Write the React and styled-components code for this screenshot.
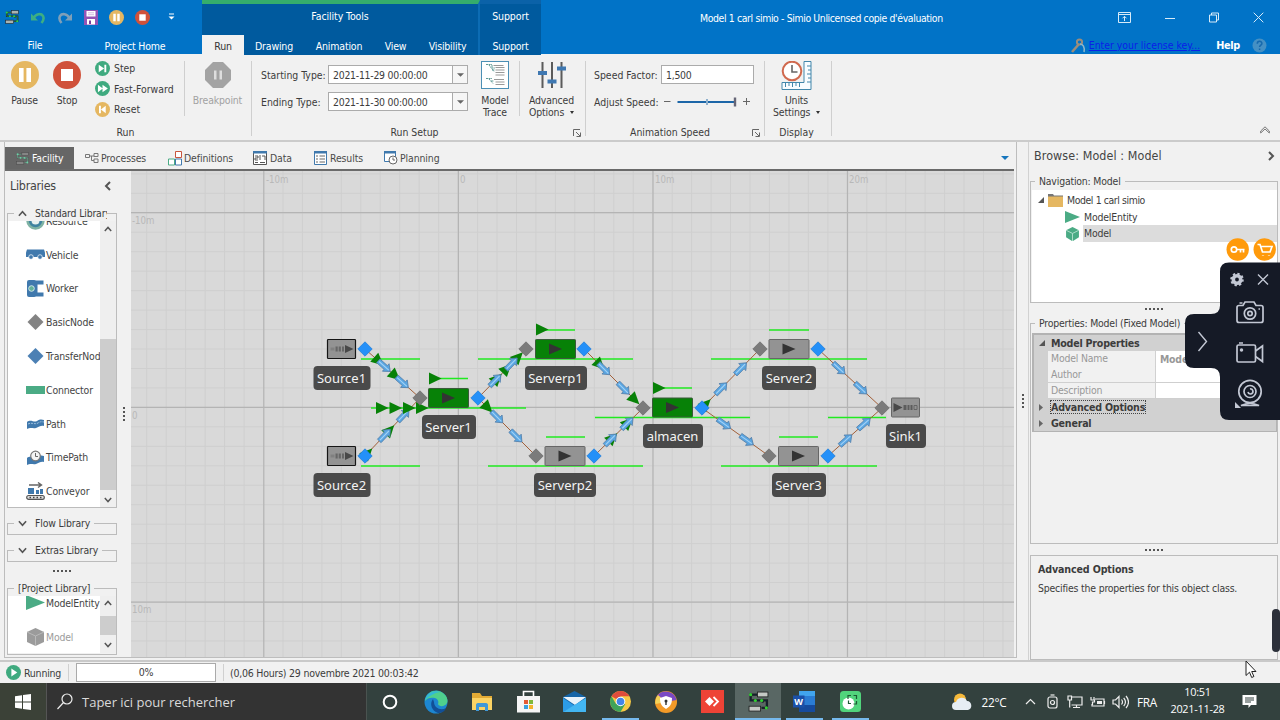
import React from "react";
import styled, { createGlobalStyle, css } from "styled-components";

const UI = '"DejaVu Sans Condensed", "DejaVu Sans", "Noto Sans", sans-serif';
const SEGOE = '"Open Sans", "Noto Sans", sans-serif';

const Global = createGlobalStyle`
  * { box-sizing: border-box; }
  html, body { margin: 0; padding: 0; overflow: hidden; }
  body { font-family: ${UI}; font-stretch: condensed; font-size: 10.4px; color: #3c3c3c; }
  svg { display: block; flex: none; }
`;

const Window = styled.div`
  position: relative;
  width: 1280px;
  height: 720px;
  display: flex;
  flex-direction: column;
  background: #f1f1f1;
  overflow: hidden;
  white-space: nowrap;
`;

/* ---------- title bar ---------- */
const Header = styled.header`
  height: 54px;
  flex: none;
  display: grid;
  grid-template-columns: 202px 278px 61px 1fr;
  background: #0173c7;
  color: #fff;
`;
const HeaderColumn = styled.div`
  display: flex;
  flex-direction: column;
  background: ${(p) => (p.$context ? "#005a9e" : "transparent")};
  border-top: ${(p) => (p.$context ? `4px solid ${p.$context}` : "0")};
  border-right: ${(p) => (p.$edge ? "2px solid #0c6cb4" : "0")};
`;
const QuickBar = styled.div`
  height: 35px;
  display: flex;
  align-items: center;
  padding: 0 0 1px 5px;
  gap: 11px;
`;
const TabStrip = styled.div`
  height: 20px;
  margin-top: auto;
  display: flex;
`;
const RibbonTab = styled.div`
  width: ${(p) => p.$w}px;
  display: flex;
  align-items: center;
  justify-content: center;
  font-size: 10.5px;
  letter-spacing: -0.2px;
  padding-top: ${(p) => (p.$low ? 2 : 0)}px;
  background: ${(p) => (p.$active ? "#f1f1f1" : "transparent")};
  color: ${(p) => (p.$active ? "#333" : "#fff")};
`;
const ContextTitle = styled.div`
  height: 26px;
  text-align: center;
  line-height: 24px;
  font-size: 10.5px;
  letter-spacing: -0.1px;
`;
const TitleRow = styled.div`
  height: 35px;
  display: flex;
  align-items: center;
`;
const AppTitle = styled.div`
  width: 562px;
  padding: 1px 0 0 159px;
  font-size: 10.4px;
  letter-spacing: -0.37px;
`;
const WindowControls = styled.div`
  flex: 1;
  display: flex;
  justify-content: space-between;
  padding: 0 16px 0 15px;
`;
const HelpRow = styled.div`
  height: 19px;
  margin-top: auto;
  display: flex;
  align-items: center;
  justify-content: flex-end;
  padding: 0 13px 1px 0;
`;
const LicenseLink = styled.span`
  color: #0a20e8;
  text-decoration: underline;
  font-size: 10.4px;
  margin: 0 16px 0 3px;
`;
const HelpText = styled.b`
  font-size: 10.8px;
  letter-spacing: -0.3px;
  margin-right: 12px;
`;

/* ---------- ribbon ---------- */
const Ribbon = styled.section`
  position: relative;
  height: 88px;
  flex: none;
  display: flex;
  padding-top: 7px;
  border-bottom: 2px solid #cbcbcb;
`;
const RibbonGroup = styled.div`
  position: relative;
  width: ${(p) => p.$w}px;
  height: 75px;
  display: flex;
  flex-direction: column;
  border-right: 1px solid #cfcfcf;
`;
const GroupBody = styled.div`
  height: 63px;
  flex: none;
  display: flex;
  padding-left: ${(p) => p.$left || 0}px;
`;
const GroupCaption = styled.div`
  height: 15px;
  line-height: 16px;
  text-align: center;
  padding-right: ${(p) => p.$shift || 0}px;
`;
const Launcher = styled.span`
  position: absolute;
  right: 4px;
  bottom: -1px;
`;
const BigButton = styled.div`
  width: ${(p) => p.$w}px;
  display: flex;
  flex-direction: column;
  align-items: center;
  text-align: center;
  line-height: 12px;
  letter-spacing: -0.15px;
  color: ${(p) => (p.$off ? "#a2a2a2" : "#3c3c3c")};
  > span { margin-top: auto; height: 30px; }
`;
const DropMark = styled.i`
  display: inline-block;
  margin-left: 3px;
  vertical-align: 2px;
  border: solid transparent;
  border-width: 3px 2.5px 0;
  border-top-color: #333;
`;
const Separator = styled.div`
  width: 1px;
  height: 55px;
  margin-left: ${(p) => p.$pull || 0}px;
  background: #cfcfcf;
`;
const StackedButtons = styled.div`
  display: flex;
  flex-direction: column;
  margin-top: -3px;
  padding-left: 7px;
  width: 96px;
`;
const SmallButton = styled.div`
  height: 20.6px;
  display: flex;
  align-items: center;
  gap: 4px;
`;
const FieldRows = styled.div`
  display: flex;
  flex-direction: column;
  gap: 8px;
  padding-top: 4px;
  width: ${(p) => p.$w}px;
`;
const FieldRow = styled.label`
  height: 19px;
  display: flex;
  align-items: center;
`;
const FieldLabel = styled.span`
  width: ${(p) => p.$w}px;
`;
const Combo = styled.span`
  width: ${(p) => p.$w}px;
  height: 19px;
  display: flex;
  align-items: center;
  background: #fff;
  border: 1px solid #ababab;
  padding-left: 4px;
  letter-spacing: -0.25px;
`;
const ComboArrow = styled.i`
  margin-left: auto;
  width: 15px;
  height: 17px;
  display: grid;
  place-items: center;
  border-left: 1px solid #ababab;
  background: #f6f6f6;
`;
const Collapse = styled.span`
  position: absolute;
  right: 10px;
  bottom: 6px;
`;
const SliderRow = styled.div`
  height: 19px;
  display: flex;
  align-items: center;
`;

/* ---------- workspace ---------- */
const Workspace = styled.main`
  height: 520px;
  flex: none;
  display: flex;
  padding-left: 4px;
  border-bottom: 2px solid #c9c9c9;
`;
const Dock = styled.section`
  width: 1013px;
  height: 516px;
  display: flex;
  flex-direction: column;
  border: solid #bdbdbd;
  border-width: 0 1px 1px 1px;
  padding: 5px 2px 0 0;
`;
const DocTabs = styled.nav`
  height: 24px;
  flex: none;
  display: flex;
  align-items: center;
  border-bottom: 2px solid #6a6a6a;
  letter-spacing: -0.1px;
`;
const DocTab = styled.div`
  width: ${(p) => p.$w}px;
  height: 22px;
  display: flex;
  align-items: center;
  gap: ${(p) => p.$gap || 3}px;
  padding-left: ${(p) => p.$pl}px;
  background: ${(p) => (p.$active ? "#666" : "transparent")};
  color: ${(p) => (p.$active ? "#fff" : "#4a4a4a")};
`;
const DocMenu = styled.span`
  margin-left: auto;
  padding-right: 5px;
`;
const DockBody = styled.div`
  flex: 1;
  display: flex;
`;
const LibraryPanel = styled.aside`
  width: 112px;
  padding-left: 2px;
  display: flex;
  flex-direction: column;
  letter-spacing: -0.15px;
`;
const PanelTitle = styled.h2`
  margin: 0;
  height: ${(p) => p.$h}px;
  display: flex;
  align-items: center;
  justify-content: space-between;
  padding: ${(p) => p.$pad};
  font-size: 12.4px;
  letter-spacing: ${(p) => p.$ls || 0}px;
  font-weight: normal;
  color: #444;
`;
const GroupBox = styled.fieldset`
  min-width: 0;
  margin: ${(p) => p.$m || 0};
  padding: 0;
  height: ${(p) => p.$h}px;
  border: 1px solid #bcbcbc;
  flex: none;
`;
const Legend = styled.legend`
  margin-left: ${(p) => (p.$ml === undefined ? 8 : p.$ml)}px;
  padding: 0 ${(p) => (p.$pr === undefined ? 4 : p.$pr)}px 0 4px;
  height: 16px;
  max-width: 93px;
  overflow: hidden;
  display: flex;
  align-items: center;
  gap: 8px;
  ${(p) => p.$wide && css`max-width: none;`}
`;
const ListArea = styled.div`
  height: ${(p) => p.$h}px;
  display: flex;
  background: #fff;
  overflow: hidden;
`;
const ItemList = styled.div`
  width: 92px;
  margin-top: ${(p) => p.$offset}px;
  padding-left: 18px;
  overflow: hidden;
`;
const LibraryItem = styled.div`
  height: 33.8px;
  display: flex;
  align-items: center;
  gap: 1px;
  color: ${(p) => (p.$off ? "#9c9c9c" : "#444")};
`;
const ScrollTrack = styled.div`
  width: 16px;
  height: 100%;
  display: flex;
  flex-direction: column;
  align-items: center;
  background: #efefef;
  padding: ${(p) => p.$pad};
`;
const ScrollThumb = styled.div`
  width: 16px;
  height: ${(p) => p.$h}px;
  margin: ${(p) => p.$m};
  background: #cdcdcd;
`;
const Grip = styled.div`
  display: flex;
  flex-direction: ${(p) => (p.$vertical ? "column" : "row")};
  align-items: center;
  justify-content: center;
  gap: 2px;
  height: ${(p) => p.$h || "auto"};
  width: ${(p) => p.$w || "auto"};
  i { width: 2px; height: 2px; background: #555; }
`;

/* ---------- model canvas ---------- */
const Canvas = styled.div`
  position: relative;
  width: 883px;
  height: 486px;
  background: #d9d9d9;
  overflow: hidden;
`;
const GridMark = styled.span`
  position: absolute;
  left: ${(p) => p.$x}px;
  top: ${(p) => p.$y}px;
  font-size: 9.6px;
  line-height: 12px;
  color: #b8b8b8;
`;
const NodeLabel = styled.span`
  position: absolute;
  left: ${(p) => p.$x}px;
  top: ${(p) => p.$y}px;
  transform: translate(-50%, -50%);
  height: 24px;
  width: ${(p) => p.$w}px;
  text-align: center;
  border-radius: 4px;
  background: #4a4a4a;
  color: #f4f4f4;
  font: 13px/25px "Noto Sans", sans-serif;
`;

/* ---------- browse panel ---------- */
const BrowsePanel = styled.aside`
  flex: 1;
  display: flex;
  flex-direction: column;
  padding: 0 2px 0 1px;
  border-left: 1px solid #d2d2d2;
  letter-spacing: -0.18px;
`;
const TreeRow = styled.div`
  height: 16.7px;
  display: flex;
  align-items: center;
  padding-left: ${(p) => p.$pl}px;
  > span {
    flex: 1;
    line-height: 16.7px;
    margin-left: 4px;
    padding-left: ${(p) => p.$tpl || 0}px;
    background: ${(p) => (p.$selected ? "#dcdcdc" : "transparent")};
  }
`;
const TreeRoot = styled(TreeRow)`
  letter-spacing: -0.4px;
  > svg + svg { margin-left: 4px; }
`;
const TreeArea = styled.div`
  height: 112px;
  padding-top: 2px;
  margin: 1px 0 0 1px;
  background: #fff;
`;
const PropertyGrid = styled.div`
  margin: 2px 0 0 1px;
  border: 1px solid #b3b3b3;
  border-width: 2px 1px 1px 2px;
  background: #d1d1d1;
`;
const PropertyHead = styled.div`
  height: 16px;
  display: flex;
  align-items: center;
  font-weight: bold;
  font-size: 10.6px;
  letter-spacing: -0.22px;
  padding-left: 5px;
  gap: ${(p) => p.$gap}px;
  > b { outline: ${(p) => (p.$focus ? "1px dotted #444" : "none")}; }
`;
const PropertyRow = styled.div`
  height: 16px;
  margin-left: 14px;
  display: grid;
  grid-template-columns: 107px 1fr;
  column-gap: 1px;
  border-bottom: 1px solid #cfcfcf;
  color: #989898;
  > span { background: #f1f1f1; padding-left: 3px; line-height: 15px; }
  > b { background: #fff; padding-left: 4px; line-height: 16px; }
`;
const HelpBox = styled.div`
  height: 105px;
  border: 1px solid #bcbcbc;
  padding: 5px 7px;
  display: flex;
  flex-direction: column;
  gap: 3px;
  line-height: 16px;
  > b { font-size: 10.6px; letter-spacing: -0.13px; }
`;

/* ---------- status bar ---------- */
const StatusBar = styled.footer`
  height: 21px;
  flex: none;
  display: flex;
  align-items: center;
  background: #f1f1f1;
  font-size: 10.5px;
  letter-spacing: -0.23px;
`;
const StatusCell = styled.div`
  width: ${(p) => p.$w}px;
  height: 17px;
  display: flex;
  align-items: center;
  gap: 3px;
  padding-left: 6px;
  border-right: 1px solid #d0d0d0;
`;
const Progress = styled.div`
  width: 140px;
  height: 19px;
  margin: 0 7px;
  border: 1px solid #aaa;
  background: #fff;
  text-align: center;
  line-height: 17px;
`;
const StatusDivider = styled.i`
  width: 1px;
  height: 17px;
  margin-right: 6px;
  background: #d0d0d0;
`;

/* ---------- taskbar ---------- */
const Taskbar = styled.div`
  height: 37px;
  flex: none;
  display: flex;
  background: #33413e;
  color: #fff;
  font-family: ${SEGOE};
  font-stretch: normal;
`;
const StartButton = styled.div`
  width: 46px;
  display: grid;
  place-items: center;
  background: #3b4137;
`;
const SearchBox = styled.div`
  width: 321px;
  display: flex;
  align-items: center;
  gap: 9px;
  padding-left: 10px;
  background: #333;
  border-left: 1px solid #555;
  border-right: 1px solid #4a5350;
  color: #dadada;
  font-size: 13px;
`;
const TaskApp = styled.div`
  width: 46px;
  display: grid;
  place-items: center;
  background: ${(p) => (p.$active ? "#596764" : "transparent")};
  background-image: ${(p) => (p.$running ? "linear-gradient(#76b9ed,#76b9ed)" : "none")};
  background-size: ${(p) => (p.$active ? 46 : 37)}px 2px;
  background-position: center bottom;
  background-repeat: no-repeat;
`;
const Tray = styled.div`
  margin-left: auto;
  width: 330px;
  display: grid;
  grid-template-columns: 24px 45px 22px 22px 24px 21px 24px 30px 71px 32px;
  align-items: center;
  justify-items: center;
  font-size: 11.8px;
  letter-spacing: -0.2px;
`;
const Temperature = styled.span`
  padding-right: 5px;
`;
const Clock = styled.div`
  text-align: center;
  font-size: 10.9px;
  line-height: 17px;
  padding-bottom: 3px;
  letter-spacing: -0.27px;
`;

/* ---------- floating overlays ---------- */
const Floating = styled.div`
  position: absolute;
  left: ${(p) => p.$x}px;
  top: ${(p) => p.$y}px;
`;

/* ---------- icons ---------- */
const PlayBadge = ({ size, fill, kind }) => (
  <svg width={size} height={size} viewBox="0 0 28 28">
    <circle cx="14" cy="14" r="14" fill={fill} />
    {kind === "pause" && <path d="M8 7h4.600v14H8zM15.400 7H20v14h-4.600z" fill="#fff" />}
    {kind === "stop" && <path d="M8 8h12v12H8z" fill="#fff" />}
    {kind === "step" && <path d="M7 7l10 7-10 7zM17.500 7H21v14h-3.500z" fill="#fff" />}
    {kind === "fast" && <path d="M5.500 7l9 7-9 7zM14 7l10 7-10 7z" fill="#fff" />}
    {kind === "reset" && <path d="M20 7l-9 7 9 7zM7.500 7H11v14H7.500z" fill="#fff" />}
    {kind === "play" && <path d="M10 6.500l11 7.500-11 7.500z" fill="#fff" />}
  </svg>
);
const SimioGlyph = ({ size = 15, body = "#a9b3b0", wire = "#2c8f4a", dot = "#2bd04a", edge = "#222" }) => (
  <svg width={size} height={size} viewBox="0 0 20 20">
    <path d="M9 3.500H2.500V9H9m0 0h5v2m0-2h4v7h-5" fill="none" stroke={edge} strokeWidth="2.200" />
    <path d="M9 3.500H2.500V9H9m0 0h5v2m0-2h4v7h-5" fill="none" stroke={wire} strokeWidth="1" />
    <rect x="9" y="1" width="10" height="4.600" fill={body} stroke={edge} strokeWidth=".8" />
    <rect x="1" y="14.500" width="11" height="4.600" fill={body} stroke={edge} strokeWidth=".8" />
    {[[2.5, 3.5], [7, 9], [13, 9], [17.5, 16]].map(([x, y]) => <circle key={x} cx={x} cy={y} r="1.500" fill={dot} />)}
  </svg>
);
const Undo = ({ color, flip }) => (
  <svg width="16" height="14" viewBox="0 0 16 14">
    <g transform={flip ? "translate(16 1) scale(-1 1)" : "translate(0 1)"}>
      <path d="M1 2.500v7h7z" fill={color} />
      <path d="M3.500 7C6 2.500 11 2 13 5c1 2 .6 4.500-1.500 7" fill="none" stroke={color} strokeWidth="2.600" />
    </g>
  </svg>
);
const Save = () => (
  <svg width="14" height="15" viewBox="0 0 14 15">
    <path d="M0 0h14v15H0z" fill="#9455b5" />
    <path d="M2.500 1h9v5.500h-9zM3 9h8v5.500H3z" fill="#fff" />
    <path d="M4 2.800h6M4 4.700h6" stroke="#c9a9d8" strokeWidth=".8" />
    <path d="M5 10.500h2V14H5z" fill="#7a3f9c" />
  </svg>
);
const Tri = ({ color = "#666", w = 7, h = 4 }) => (
  <svg width={w} height={h} viewBox="0 0 8 4"><path d="M0 0h8L4 4z" fill={color} /></svg>
);
const Chevron = ({ d = "up", color = "#555", s = 9, w = 1.8 }) => (
  <svg width={s} height={s} viewBox="0 0 10 10">
    <path d={{ up: "M1 7.500l4-4.500 4 4.500", down: "M1 2.500L5 7l4-4.500", left: "M7 1L3 5l4 4", right: "M3 1l4 4-4 4" }[d]} fill="none" stroke={color} strokeWidth={w} />
  </svg>
);
const Octagon = () => (
  <svg width="26" height="27" viewBox="0 0 26 27">
    <path d="M8 1h10l8 8v10l-8 8H8l-8-8V9z" fill="#a3a3a3" />
    <path d="M9 9.500h2.500v9H9zM14.500 9.500H17v9h-2.500z" fill="#dedede" />
  </svg>
);
const TraceIcon = () => (
  <svg width="28" height="28" viewBox="0 0 28 28">
    <rect x=".5" y=".5" width="27" height="27" fill="#fff" stroke="#4b8fb5" />
    <path d="M5 3.500h6M8 4l5 6.500M11 4v3h3M11 9h3M5 17.500h6M8 18l4 4.500M10 20h3" stroke="#5f9a96" fill="none" strokeDasharray="2 .6" />
    <path d="M12.500 4.500h10M14.500 6.500h9M14.500 9h9M14.500 11.500h9M14.500 14h9M13 18.500h10M14.500 21h9M14.500 23.500h9" stroke="#999" />
  </svg>
);
const Sliders = () => (
  <svg width="28" height="28" viewBox="0 0 28 28">
    <path d="M4.500 1v26M14 1v26M23.500 1v26" stroke="#5b5b5b" strokeWidth="2" />
    <path d="M0 10h9v4H0zM9.500 18.500h9v4h-9zM19 5.500h9v4h-9z" fill="#3f78b1" />
  </svg>
);
const UnitsIcon = () => (
  <svg width="31" height="30" viewBox="0 0 31 30">
    <path d="M23 .5h7v28H1v-7h22z" fill="#f8fcff" stroke="#4287ab" />
    <path d="M4.500 22v4M8 22v3M11.500 22v4M15 22v3M18.500 22v4M30 5h-4M30 9h-3M30 13h-4M30 17h-3M30 21h-4" stroke="#4287ab" />
    <circle cx="11" cy="10" r="9.300" fill="#fff" stroke="#d0694e" strokeWidth="2" />
    <path d="M11 4v7h5.500" fill="none" stroke="#666" strokeWidth="1.600" />
  </svg>
);
const LauncherIcon = () => (
  <svg width="8" height="8" viewBox="0 0 8 8">
    <path d="M.5 7V.5H7M3 3l4 4M7.500 3.500v4h-4" fill="none" stroke="#666" />
  </svg>
);
const SpeedSlider = () => (
  <svg width="90" height="10" viewBox="0 0 90 10">
    <path d="M3 4.500h6.500M82 4.500h7M85.500 1v7" stroke="#666" strokeWidth="1" />
    <path d="M16.500 5h56.500" stroke="#1c66a8" strokeWidth="2" />
    <path d="M46 2v6" stroke="#8fb0cc" strokeWidth="2" />
    <path d="M74 .5v9" stroke="#667" strokeWidth="2.400" />
  </svg>
);
const CubeIcon = ({ size = 15, color, line }) => (
  <svg width={size} height={size * 1.1} viewBox="0 0 18 20">
    <path d="M9 0l9 4.500v10L9 20l-9-5.500v-10z" fill={color} />
    <path d="M0 4.500L9 9l9-4.500M9 9v11" fill="none" stroke={line} strokeWidth="1.200" />
  </svg>
);
const FolderIcon = () => (
  <svg width="15" height="13" viewBox="0 0 15 13"><path d="M0 0h5l1 1.500h9V4H0z" fill="#777" /><path d="M0 2.500h15V13H0z" fill="#e5b761" /></svg>
);
const Flag = ({ w = 19, h = 15 }) => (
  <svg width={w} height={h} viewBox="0 0 19 15"><path d="M0 0l19 7.500L0 15z" fill="#4bab85" /></svg>
);
const Wave = () => <path d="M1 4c4-3 7 1 10-1s5-1.500 7-1v6c-3-1-5 1-8 2s-5-1-9 1z" fill="#4079ad" />;
const libraryIcons = {
  Resource: <svg width="19" height="19" viewBox="0 0 19 19"><circle cx="9.500" cy="9.500" r="8" fill="#3f83a0" stroke="#7fb3a4" strokeWidth="2.500" /><circle cx="9.500" cy="9.500" r="4" fill="#e6f0ee" /></svg>,
  Vehicle: <svg width="19" height="11" viewBox="0 0 19 11"><path d="M1 .5h17l1 3V8H0V3.500z" fill="#4079ad" /><circle cx="5" cy="8" r="2.300" fill="#4079ad" stroke="#fff" strokeWidth=".7" /><circle cx="14" cy="8" r="2.300" fill="#4079ad" stroke="#fff" strokeWidth=".7" /></svg>,
  Worker: <svg width="19" height="17" viewBox="0 0 19 17"><rect x="1" y="0" width="9" height="17" rx="2" fill="#4079ad" /><path d="M8 .5h9.500v4h-6v8h6v4H8z" fill="#4079ad" /><circle cx="5.500" cy="8.500" r="2.800" fill="#62b29a" stroke="#cfe5ea" /></svg>,
  BasicNode: <svg width="19" height="16" viewBox="0 0 19 16"><path d="M9.500 0l8 8-8 8-8-8z" fill="#838383" /></svg>,
  TransferNode: <svg width="19" height="16" viewBox="0 0 19 16"><path d="M9.500 0l8 8-8 8-8-8z" fill="#4c80b4" /></svg>,
  Connector: <svg width="19" height="8"><path d="M0 0h19v8H0z" fill="#4bab85" /></svg>,
  Path: <svg width="19" height="11" viewBox="0 0 19 11"><Wave /><path d="M2 6c4-2 7 1 10-1s4-1 6-1" stroke="#9cc0de" fill="none" strokeDasharray="2 1" /></svg>,
  TimePath: <svg width="19" height="15" viewBox="0 0 19 15"><g transform="translate(0 4)"><Wave /></g><circle cx="9.500" cy="6" r="4.800" fill="#f4f4f4" stroke="#777" strokeWidth="1.200" /><path d="M9.500 3v3.500H12" stroke="#666" fill="none" /></svg>,
  Conveyor: <svg width="19" height="18" viewBox="0 0 19 18"><path d="M3 3h12M12 .5L15.500 3 12 5.500" fill="none" stroke="#666" strokeWidth="1.400" /><path d="M2 6h6v6H2zM10 8h3v4h-3zM14 7h3v5h-3z" fill="#4079ad" /><rect x=".7" y="13.500" width="17.600" height="3.800" rx="1.900" fill="#ddd" stroke="#555" strokeWidth="1.200" /><path d="M3.500 15.400h1.500M7 15.400h1.500M10.500 15.400H12M14 15.400h1.500" stroke="#444" strokeWidth="1.500" /></svg>,
};

/* ---------- model drawing ---------- */
const OX = 131;
const OY = 171;
const step = 19.46;
const range = (a, b) => Array.from({ length: b - a + 1 }, (_, i) => a + i);
const Link = ({ a, b, marks = [], spots = [0.33, 0.67] }) => {
  const angle = (Math.atan2(b[1] - a[1], b[0] - a[0]) * 180) / Math.PI;
  return (
    <g>
      <path d={`M${a}L${b}`} stroke="#a2603a" strokeWidth="1" />
      {marks.map((m) => <Entity key={m} x={a[0] + (b[0] - a[0]) * m} y={a[1] + (b[1] - a[1]) * m} angle={angle} />)}
      {spots.map((t) => (
        <g key={t} transform={`translate(${a[0] + (b[0] - a[0]) * t} ${a[1] + (b[1] - a[1]) * t}) rotate(${angle})`}>
          <path d="M-8-2.500H2V-5L8 0 2 5V2.500H-8z" fill="#5aa6e2" stroke="#5580aa" strokeWidth=".8" />
          <path d="M-7 0H6" stroke="#a5d2f6" strokeWidth="1.100" />
        </g>
      ))}
    </g>
  );
};
const Entity = ({ x, y, angle = 0 }) => (
  <path transform={`translate(${x} ${y}) rotate(${angle})`} d="M-6-6L6.500 0-6 6z" fill="#078107" />
);
const Diamond = ({ x, y, blue }) => (
  <path d={`M${x} ${y - 7.2}l7.200 7.200-7.200 7.200-7.200-7.200z`} fill={blue ? "#2490f8" : "#7b7b7b"} stroke={blue ? "#1b7bd8" : "#6a6a6a"} strokeWidth=".7" />
);
const Machine = ({ x, y, busy, kind = "server" }) => {
  const w = kind === "server" ? 40 : 28;
  return (
    <g transform={`translate(${x} ${y})`}>
      <rect x={-w / 2} y="-9.500" width={w} height="19" rx=".8" fill={busy ? "#078107" : "#939393"} stroke={kind === "source" ? "#151515" : busy ? "#3a5a3a" : "#666"} strokeWidth={kind === "source" ? 1.2 : 1} />
      {kind === "server" && <path d="M-6.500-5.500L6.500 0-6.500 5.500z" fill="#333" />}
      {kind === "source" && <g fill="#666"><path d="M3.500-4l8.500 4-8.500 4z" fill="#484848" /><path d="M-11-1.500h4v3h-4z" fill="#808080" /><path d="M-6-2.500h2.200v5H-6zM-2.800-2.500h2.200v5h-2.200zM.5-2.500h2v5h-2z" /></g>}
      {kind === "sink" && <g fill="#5c5c5c"><path d="M-12-4.500l9 4.500-9 4.500z" fill="#484848" /><path d="M-2-2.500H1v5h-3zM2-2.500h2v5H2zM5-2.500h2v5H5z" /><path d="M8.500-2h3v4h-3z" fill="none" stroke="#666" /></g>}
    </g>
  );
};
const QUEUES = [
  [361, 359, 420], [361, 466, 420], [478, 359, 633], [536, 330, 575], [371, 408, 526], [430, 378.5, 468],
  [488, 466, 643], [546, 437, 585], [595, 417.5, 750], [653, 388, 692], [711, 359, 867], [769, 330, 809],
  [721, 466, 877], [779, 437, 818], [828, 417.5, 886],
];
const MODEL_LABELS = [
  ["Source1", 341.5, 377.5, 57], ["Source2", 341.5, 484.5, 57], ["Server1", 448.5, 426, 54],
  ["Serverp1", 555.5, 377.5, 62], ["Serverp2", 565, 484.5, 62], ["almacen", 672.5, 435.5, 60],
  ["Server2", 789, 377.5, 54], ["Server3", 798.5, 484.5, 54], ["Sink1", 905.5, 435.5, 40],
];
const ModelDrawing = () => (
  <svg width="883" height="486" viewBox={`${OX} ${OY} 883 486`}>
    <g stroke="#cfcfcf" strokeWidth="1">
      {range(-6, 38).map((i) => <path key={`v${i}`} d={`M${263.5 + i * step} 171V657`} />)}
      {range(-2, 23).map((i) => <path key={`h${i}`} d={`M131 ${212.8 + i * step}H1014`} />)}
    </g>
    <g stroke="#b4b4b4" strokeWidth="1.200">
      {[263.8, 458.4, 653, 847.5].map((x) => <path key={x} d={`M${x} 171V657`} />)}
      {[212.7, 407.4, 602.1].map((y) => <path key={y} d={`M131 ${y}H1014`} />)}
    </g>
    <g stroke="#20ea20" strokeWidth="1.500">
      {QUEUES.map(([x, y, x2]) => <path key={`${x}-${y}`} d={`M${x} ${y}H${x2}`} />)}
    </g>
    <Link a={[365, 349]} b={[420, 398]} marks={[0.25, 0.55]} spots={[0.35, 0.68]} />
    <Link a={[365, 456]} b={[420, 398]} marks={[0.05, 0.45]} spots={[0.36, 0.7]} />
    <Link a={[478, 398]} b={[526, 349]} marks={[0.4, 0.6, 0.84]} spots={[0.36, 0.7]} />
    <Link a={[478, 398]} b={[536, 456]} marks={[0.17]} spots={[0.33, 0.66]} />
    <Link a={[584, 349]} b={[643, 408]} marks={[0.27, 0.86]} spots={[0.34, 0.67]} />
    <Link a={[594, 456]} b={[643, 408]} marks={[0.38, 0.7]} spots={[0.34, 0.68]} />
    <Link a={[702, 408]} b={[760, 349]} marks={[0.07]} />
    <Link a={[702, 408]} b={[769, 456]} />
    <Link a={[818, 349]} b={[882, 408]} />
    <Link a={[828, 456]} b={[882, 408]} />
    {[382, 395.5, 409, 422].map((x) => <Entity key={x} x={x} y={408} />)}
    <Entity x={435} y={378.5} />
    <Entity x={542} y={329.5} />
    <Entity x={659} y={388} />
    {[[420, 398], [526, 349], [536, 456], [643, 408], [760, 349], [769, 456], [882, 408]].map(([x, y]) => <Diamond key={`${x}${y}`} x={x} y={y} />)}
    {[[365, 349], [365, 456], [478, 398], [584, 349], [594, 456], [702, 408], [818, 349], [828, 456]].map(([x, y]) => <Diamond key={`${x}${y}`} x={x} y={y} blue />)}
    <Machine x={341.5} y={349} kind="source" />
    <Machine x={341.5} y={456} kind="source" />
    <Machine x={448.5} y={398} busy />
    <Machine x={555.5} y={349} busy />
    <Machine x={565} y={456} />
    <Machine x={672.5} y={407.5} busy />
    <Machine x={789} y={349} />
    <Machine x={798.5} y={456} />
    <Machine x={905.5} y={407.5} kind="sink" />
  </svg>
);

/* ---------- taskbar icons ---------- */
const TASKS = [
  { id: "cortana", icon: <svg width="18" height="18"><circle cx="9" cy="9" r="6.300" fill="none" stroke="#fff" strokeWidth="2" /></svg> },
  { id: "edge", icon: <svg width="24" height="24" viewBox="0 0 24 24"><circle cx="12" cy="12" r="11.500" fill="#1d86d0" /><path d="M1 11C2 3 9 0 14 1c7 1 11 8 9 12-2 4-8 4-9 1 1-2 0-5-3-6-4-1-8 0-10 3z" fill="#4fcf8d" /><path d="M1 10C3 2 11 0 16 2 10 3 5 6 1 10z" fill="#33b8d6" /><path d="M9 9c-4 5-1 12 5 14 4 0 7-2 8-5-5 3-12 0-12-6z" fill="#124f96" /></svg> },
  { id: "files", icon: <svg width="22" height="20" viewBox="0 0 22 20"><path d="M1 1h8l2 3h10v14H1z" fill="#e3ab35" /><path d="M1 6h20v12H1z" fill="#fbd364" /><path d="M5 19v-6c0-1 .5-2 2-2h8c1.500 0 2 1 2 2v6h-3v-4H8v4z" fill="#3f98d8" /></svg> },
  { id: "store", icon: <svg width="23" height="23" viewBox="0 0 23 23"><path d="M6.500 7V1.500h10V7" fill="none" stroke="#fff" strokeWidth="1.600" /><path d="M0 6h23v16.500H0z" fill="#f5f5f5" /><path d="M7 10h4v4H7z" fill="#e35a34" /><path d="M12 10h4v4h-4z" fill="#7fb93a" /><path d="M7 15h4v4H7z" fill="#3aa0e0" /><path d="M12 15h4v4h-4z" fill="#f3b32b" /></svg> },
  { id: "mail", icon: <svg width="23" height="21" viewBox="0 0 23 21"><path d="M0 6l11.500-6L23 6v15H0z" fill="#1565a8" /><path d="M0 6h23L12 14z" fill="#e8f2fa" /><path d="M0 7l12 8L0 21z" fill="#2c9be6" /><path d="M23 7L0 21h23z" fill="#43b6f2" /></svg> },
  { id: "chrome", running: true, icon: <svg width="21" height="21" viewBox="0 0 22 22"><circle cx="11" cy="11" r="11" fill="#f6c944" /><path d="M11 11L1.500 5.500A11 11 0 0 1 20.500 5.500H11z" fill="#df4c3c" /><path d="M1.500 5.500A11 11 0 0 0 11 22l5-8.500L11 11 6.300 13.700z" fill="#3fa35a" /><circle cx="11" cy="11" r="5" fill="#fff" /><circle cx="11" cy="11" r="4" fill="#4285e8" /></svg> },
  { id: "vpn", icon: <svg width="22" height="22" viewBox="0 0 22 22"><circle cx="11" cy="11" r="11" fill="#f39a27" /><path d="M2 5A11 11 0 0 1 21.500 9L11 11z" fill="#7a49c4" /><path d="M.5 13A11 11 0 0 1 3 4l8 7z" fill="#f3d35b" /><path d="M11 5l6 2c0 5-1 8-6 11-5-3-6-6-6-11z" fill="#fff" /><circle cx="11" cy="10" r="1.500" fill="#333" /><path d="M10.300 10h1.400v4h-1.400z" fill="#333" /></svg> },
  { id: "anydesk", icon: <svg width="23" height="23" viewBox="0 0 23 23"><path d="M0 0h23v23H0z" fill="#ee4336" /><path d="M8.500 7l4.500 4.500L8.500 16 4 11.500z" fill="#fff" /><path d="M12.500 7l4.500 4.500-4.500 4.500" stroke="#fff" strokeWidth="1.800" fill="none" /></svg> },
  { id: "simio", running: true, active: true, icon: <SimioGlyph size={21} body="#c5c9c5" wire="#123" dot="#30d030" /> },
  { id: "word", running: true, icon: <svg width="22" height="21" viewBox="0 0 22 21"><path d="M6 0h16v21H6z" fill="#2b7cd3" /><path d="M6 0h16v5H6z" fill="#41a5ee" /><path d="M6 14h16v7H6z" fill="#164a9c" /><path d="M0 4.500h11.500v12H0z" fill="#1b50a8" /><text x="5.700" y="13.800" textAnchor="middle" fontFamily="Open Sans, sans-serif" fontSize="9" fontWeight="700" fill="#fff">W</text></svg> },
  { id: "timer", running: true, icon: <svg width="21" height="21" viewBox="0 0 21 21"><rect width="21" height="21" rx="3.500" fill="#51d47c" /><circle cx="8.500" cy="12.500" r="6" fill="#fff" /><path d="M8 8V4.500h3M13.500 4.500h3V8M16.500 10v3h-3M8.500 9.500v3H11" stroke="#1d5b34" strokeWidth="1.200" fill="none" /></svg> },
];

const Dots = (props) => <Grip {...props}><i /><i /><i /><i />{!props.$vertical && <i />}</Grip>;

const TitleArea = () => (
  <Header>
    <HeaderColumn>
      <QuickBar>
        <SimioGlyph size={14} />
        <Undo color="#3dae84" />
        <Undo color="#7f9fb8" flip />
        <Save />
        <PlayBadge size={15} fill="#e5b761" kind="pause" />
        <PlayBadge size={15} fill="#d0513a" kind="stop" />
        <svg width="18" height="8" viewBox="0 0 18 8"><path d="M8 1h5" stroke="#fff" /><path d="M7.500 3.500h6l-3 3z" fill="#fff" /></svg>
      </QuickBar>
      <TabStrip>
        <RibbonTab $w={70}>File</RibbonTab>
        <RibbonTab $w={130} $low>Project Home</RibbonTab>
      </TabStrip>
    </HeaderColumn>
    <HeaderColumn $context="#35ad6c" $edge>
      <ContextTitle>Facility Tools</ContextTitle>
      <TabStrip>
        <RibbonTab $w={42} $active $low>Run</RibbonTab>
        <RibbonTab $w={60} $low>Drawing</RibbonTab>
        <RibbonTab $w={70} $low>Animation</RibbonTab>
        <RibbonTab $w={43} $low>View</RibbonTab>
        <RibbonTab $w={61} $low>Visibility</RibbonTab>
      </TabStrip>
    </HeaderColumn>
    <HeaderColumn $context="#0b62a8">
      <ContextTitle>Support</ContextTitle>
      <TabStrip><RibbonTab $w={61} $low>Support</RibbonTab></TabStrip>
    </HeaderColumn>
    <HeaderColumn>
      <TitleRow>
        <AppTitle>Model 1 carl simio - Simio Unlicensed copie d'évaluation</AppTitle>
        <WindowControls>
          <svg width="13" height="11" viewBox="0 0 13 11"><path d="M.5.500h12v10H.500zM.5 2.500h12M6.500 9V4.500M4.500 6.300l2-2 2 2" fill="none" stroke="#d8ebf8" /></svg>
          <svg width="10" height="11"><path d="M0 6.500h10" stroke="#d8ebf8" /></svg>
          <svg width="10" height="11" viewBox="0 0 10 11"><path d="M.5 3h7v7h-7zM2.500 3V1h7v7h-2" fill="none" stroke="#d8ebf8" /></svg>
          <svg width="11" height="11" viewBox="0 0 11 11"><path d="M.7.700l9.600 9.600M10.300.700L.7 10.300" stroke="#d8ebf8" /></svg>
        </WindowControls>
      </TitleRow>
      <HelpRow>
        <svg width="15" height="15" viewBox="0 0 15 15"><path d="M1 14l7-8" stroke="#9a8d7c" strokeWidth="2.600" /><circle cx="8.500" cy="4" r="2.600" fill="none" stroke="#9a8d7c" strokeWidth="2" /><path d="M9 6c3 0 5 3 4 8" fill="none" stroke="#8fb7c9" strokeWidth="1.500" /></svg>
        <LicenseLink>Enter your license key...</LicenseLink>
        <HelpText>Help</HelpText>
        <svg width="15" height="15" viewBox="0 0 15 15"><circle cx="7.500" cy="7.500" r="7" fill="#4590c4" /><path d="M5.300 5.800c0-3.200 4.600-3.200 4.600-.4 0 1.700-2.300 1.800-2.300 3.700M7.600 10.500v1.500" fill="none" stroke="#1769ae" strokeWidth="1.500" /></svg>
      </HelpRow>
    </HeaderColumn>
  </Header>
);

const RibbonArea = () => (
  <Ribbon>
    <RibbonGroup $w={252}>
      <GroupBody $left={3}>
        <BigButton $w={43}><PlayBadge size={28} fill="#e5b761" kind="pause" /><span>Pause</span></BigButton>
        <BigButton $w={42}><PlayBadge size={28} fill="#d0513a" kind="stop" /><span>Stop</span></BigButton>
        <StackedButtons>
          <SmallButton><PlayBadge size={15} fill="#3faa7f" kind="step" />Step</SmallButton>
          <SmallButton><PlayBadge size={15} fill="#3faa7f" kind="fast" />Fast-Forward</SmallButton>
          <SmallButton><PlayBadge size={15} fill="#e5b761" kind="reset" />Reset</SmallButton>
        </StackedButtons>
        <Separator />
        <BigButton $w={65} $off><Octagon /><span>Breakpoint</span></BigButton>
      </GroupBody>
      <GroupCaption>Run</GroupCaption>
    </RibbonGroup>
    <RibbonGroup $w={334}>
      <GroupBody $left={9}>
        <FieldRows $w={207}>
          <FieldRow><FieldLabel $w={67}>Starting Type:</FieldLabel><Combo $w={140}>2021-11-29 00:00:00<ComboArrow><Tri /></ComboArrow></Combo></FieldRow>
          <FieldRow><FieldLabel $w={67}>Ending Type:</FieldLabel><Combo $w={140}>2021-11-30 00:00:00<ComboArrow><Tri /></ComboArrow></Combo></FieldRow>
        </FieldRows>
        <BigButton $w={54}><TraceIcon /><span>Model<br />Trace</span></BigButton>
        <Separator $pull={-3} />
        <BigButton $w={63}><Sliders /><span>Advanced<br />Options <DropMark /></span></BigButton>
      </GroupBody>
      <GroupCaption $shift={8}>Run Setup</GroupCaption>
      <Launcher><LauncherIcon /></Launcher>
    </RibbonGroup>
    <RibbonGroup $w={179}>
      <GroupBody $left={8}>
        <FieldRows $w={165}>
          <FieldRow><FieldLabel $w={67}>Speed Factor:</FieldLabel><Combo $w={93}>1,500</Combo></FieldRow>
          <SliderRow><FieldLabel $w={67}>Adjust Speed:</FieldLabel><SpeedSlider /></SliderRow>
        </FieldRows>
      </GroupBody>
      <GroupCaption $shift={10}>Animation Speed</GroupCaption>
      <Launcher><LauncherIcon /></Launcher>
    </RibbonGroup>
    <RibbonGroup $w={67}>
      <GroupBody>
        <BigButton $w={63}><UnitsIcon /><span>Units<br />Settings <DropMark /></span></BigButton>
      </GroupBody>
      <GroupCaption $shift={3}>Display</GroupCaption>
    </RibbonGroup>
    <Collapse><svg width="10" height="8" viewBox="0 0 10 8"><path d="M.7 5L5 .8 9.300 5M.7 5v2L5 3l4.300 4V5" fill="none" stroke="#777" /></svg></Collapse>
  </Ribbon>
);

const LibraryArea = () => (
  <LibraryPanel>
    <PanelTitle $h={34} $pad="0 4px 5px 3px" $ls={-0.25}>Libraries<Chevron d="left" s={10} w={2} /></PanelTitle>
    <GroupBox $h={303}>
      <Legend $ml={6} $pr={0}><Chevron />Standard Library</Legend>
      <ListArea $h={286}>
        <ItemList $offset={-17}>
          {Object.entries(libraryIcons).map(([name, icon]) => <LibraryItem key={name}>{icon}{name}</LibraryItem>)}
        </ItemList>
        <ScrollTrack $pad="4px 0 3px"><Chevron s={8} /><ScrollThumb $h={151} $m="106px 0 auto" /><Chevron d="down" s={8} /></ScrollTrack>
      </ListArea>
    </GroupBox>
    <GroupBox $h={20} $m="7px 0 0"><Legend $ml={6}><Chevron d="down" />Flow Library</Legend></GroupBox>
    <GroupBox $h={20} $m="7px 0 0"><Legend $ml={6}><Chevron d="down" />Extras Library</Legend></GroupBox>
    <Dots $h="17px" />
    <GroupBox $h={75} $m="1px 0 0">
      <Legend $ml={6}>[Project Library]</Legend>
      <ListArea $h={57}>
        <ItemList $offset={-10}>
          <LibraryItem><Flag />ModelEntity</LibraryItem>
          <LibraryItem $off><svg width="19" height="18" viewBox="0 0 19 18"><path d="M9.500 0L18 4v10l-8.500 4L1 14V4z" fill="#9b9b9b" /><path d="M1 4l8.500 4L18 4M9.500 8v10" fill="none" stroke="#b9b9b9" /></svg>Model</LibraryItem>
        </ItemList>
        <ScrollTrack $pad="3px 0 4px"><Chevron s={8} /><ScrollThumb $h={19} $m="9px 0 auto" /><Chevron d="down" s={8} /></ScrollTrack>
      </ListArea>
    </GroupBox>
  </LibraryPanel>
);

const DocumentTabs = () => (
  <DocTabs>
    <DocTab $w={69} $pl={11} $active><SimioGlyph size={13} body="#858585" wire="#6fbf9f" dot="#6fd0a8" edge="#4c4c4c" />Facility</DocTab>
    <DocTab $w={87} $pl={11} $gap={2}><svg width="14" height="10" viewBox="0 0 14 10"><path d="M.5 1.500h4v3h-4zM9 .5h4v3H9zM9 6h4v3.500H9zM4.500 3H9M6.500 3v4.500H9" fill="none" stroke="#777" /></svg>Processes</DocTab>
    <DocTab $w={84} $pl={7} $gap={2}><svg width="14" height="15" viewBox="0 0 14 15"><path d="M7.500.500h6v6h-6z" fill="#fff" stroke="#c8553d" /><path d="M.5 8h6v6h-6z" fill="#fff" stroke="#4bab85" /><path d="M7.500 8h6v6h-6z" fill="#fff" stroke="#4079ad" /></svg>Definitions</DocTab>
    <DocTab $w={62} $pl={8}><svg width="14" height="14" viewBox="0 0 14 14"><path d="M.5.500h13v13H.500z" fill="#fff" stroke="#555" /><path d="M0 0h14v2.500H0z" fill="#4079ad" /><path d="M2 5h3v2H2v2h3M7 4v5M9 5h3v4M2 11.500h3M7 11.500h5" stroke="#555" fill="none" /></svg>Data</DocTab>
    <DocTab $w={70} $pl={7}><svg width="13" height="14" viewBox="0 0 13 14"><path d="M.5.500h12v13H.500z" fill="#fff" stroke="#4079ad" /><path d="M0 0h13v2.500H0z" fill="#4079ad" /><path d="M2 5h2M2 8h2M2 11h2M5.500 5h5.500M5.500 8h5.500M5.500 11h5.500" stroke="#666" /></svg>Results</DocTab>
    <DocTab $w={70} $pl={7} $gap={2}><svg width="14" height="14" viewBox="0 0 14 14"><path d="M.5.500h11v10H.500z" fill="#fff" stroke="#4079ad" /><path d="M0 0h12v2.500H0z" fill="#4079ad" /><circle cx="9" cy="9" r="4" fill="#fff" stroke="#666" /><path d="M9 6.500V9h2" fill="none" stroke="#666" /></svg>Planning</DocTab>
    <DocMenu><Tri color="#1676bd" w={8} /></DocMenu>
  </DocTabs>
);

const ModelCanvas = () => (
  <Canvas>
    <ModelDrawing />
    <GridMark $x={135} $y={3}>-10m</GridMark>
    <GridMark $x={329} $y={3}>0</GridMark>
    <GridMark $x={524} $y={3}>10m</GridMark>
    <GridMark $x={718} $y={3}>20m</GridMark>
    <GridMark $x={1} $y={44}>-10m</GridMark>
    <GridMark $x={1} $y={239}>0</GridMark>
    <GridMark $x={1} $y={433}>10m</GridMark>
    {MODEL_LABELS.map(([name, x, y, w]) => <NodeLabel key={name} $x={x - OX} $y={y - OY + 0.5} $w={w}>{name}</NodeLabel>)}
  </Canvas>
);

const Expanded = () => <svg width="6" height="6"><path d="M6 0v6H0z" fill="#555" /></svg>;
const Collapsed = () => <svg width="4" height="7" viewBox="0 0 4 7"><path d="M0 0l4 3.500L0 7z" fill="#666" /></svg>;

const BrowseArea = () => (
  <BrowsePanel>
    <PanelTitle $h={31} $pad="0 2px 4px 4px" $ls={0.1}>Browse: Model : Model<Chevron d="right" s={10} w={2} /></PanelTitle>
    <GroupBox $h={130}>
      <Legend $ml={4} $wide>Navigation: Model</Legend>
      <TreeArea>
        <TreeRoot $pl={6}><Expanded /><FolderIcon /><span>Model 1 carl simio</span></TreeRoot>
        <TreeRow $pl={33}><Flag w={15} h={14} /><span>ModelEntity</span></TreeRow>
        <TreeRow $pl={34} $tpl={1} $selected><CubeIcon size={13} color="#4bab85" line="#bfe5d5" /><span>Model</span></TreeRow>
      </TreeArea>
    </GroupBox>
    <Dots $h="11px" />
    <GroupBox $h={229} $m="1px 0 0">
      <Legend $ml={4} $wide>Properties: Model (Fixed Model)</Legend>
      <PropertyGrid>
        <PropertyHead $gap={6}><Expanded /><b>Model Properties</b></PropertyHead>
        <PropertyRow><span>Model Name</span><b>Model</b></PropertyRow>
        <PropertyRow><span>Author</span><b /></PropertyRow>
        <PropertyRow><span>Description</span><b /></PropertyRow>
        <PropertyHead $gap={8} $focus><Collapsed /><b>Advanced Options</b></PropertyHead>
        <PropertyHead $gap={8}><Collapsed /><b>General</b></PropertyHead>
      </PropertyGrid>
    </GroupBox>
    <Dots $h="11px" />
    <HelpBox><b>Advanced Options</b><span>Specifies the properties for this object class.</span></HelpBox>
  </BrowsePanel>
);

const RecorderWidget = () => (
  <svg width="96" height="184" viewBox="1184 237 96 184">
    <circle cx="1237.700" cy="249.500" r="11.200" fill="#ff9a0b" />
    <circle cx="1264.700" cy="249.500" r="11.200" fill="#ff9a0b" />
    <g fill="none" stroke="#fff" strokeWidth="1.700"><circle cx="1234" cy="249.500" r="2.700" /><path d="M1237 249.500h7.500M1240.500 249.500v3M1243.500 249.500v3" /><path d="M1257.500 244.500h2.500l2.500 7.500h7.500l2-5.500h-11" /><path d="M1263 255v.5M1269 255v.5" strokeWidth="2.200" /></g>
    <path d="M1280 262.500h-51q-9 0-9 9v34q0 8.500-9 8.500h-17q-9 0-9 9v36q0 9 9 9h17q9 0 9 9v34q0 9 9 9h51z" fill="#151a26" />
    <g fill="none" stroke="#c3c8d4" strokeWidth="1.700">
      <path d="M1198.500 332l8 9.500-8 9.500" strokeWidth="1.400" />
      <path d="M1258 274.500l10 10M1268 274.500l-10 10" strokeWidth="1.400" />
      <circle cx="1237" cy="279.500" r="3.700" strokeWidth="3.600" />
      <circle cx="1237" cy="279.500" r="5.800" strokeWidth="2" strokeDasharray="2.300 2.200" />
      <path d="M1239 305.500h4l2-3.500h9l2 3.500h5q2 0 2 2v13q0 2-2 2h-22q-2 0-2-2v-13q0-2 2-2z" /><circle cx="1250" cy="313.500" r="5.700" /><circle cx="1250" cy="313.500" r="2.200" /><path d="M1258.500 309h1.500M1239.500 303h3" />
      <rect x="1237" y="345" width="18.500" height="17" rx="1.500" /><path d="M1255.500 351l7-5v15.500l-7-5M1239 343h4" /><circle cx="1241.500" cy="350" r=".9" />
      <circle cx="1250" cy="391.500" r="11.200" /><circle cx="1250" cy="391.500" r="6" /><path d="M1250 389a2.500 2.500 0 1 1-2 3M1241 405.500q9-4 18 0z" />
    </g>
    <path d="M1235 402v6h6z" fill="#c3c8d4" />
  </svg>
);

const stroke = { fill: "none", stroke: "#eee", strokeWidth: 1.2 };
const TaskbarArea = () => (
  <Taskbar>
    <StartButton><svg width="16" height="16" viewBox="0 0 16 16"><path d="M0 2.300L7 1.300v6.200H0zM8 1.100L16 0v7.500H8zM0 8.500h7v6.200l-7-1zM8 8.500h8V16l-8-1.100z" fill="#fff" /></svg></StartButton>
    <SearchBox><svg width="16" height="17" viewBox="0 0 16 17"><circle cx="10" cy="6" r="5" {...stroke} /><path d="M6.500 9.500L.5 16" {...stroke} /></svg>Taper ici pour rechercher</SearchBox>
    {TASKS.map((t) => <TaskApp key={t.id} $running={t.running} $active={t.active}>{t.icon}</TaskApp>)}
    <Tray>
      <svg width="22" height="18" viewBox="0 0 22 18"><circle cx="9" cy="6.500" r="6" fill="#f6b93b" /><path d="M5 17a4 4 0 0 1 0-8 6 6 0 0 1 11-1 4.600 4.600 0 0 1 1 9z" fill="#e6edf4" /></svg>
      <Temperature>22°C</Temperature>
      <svg width="11" height="7"><path d="M1 6l4.500-4.500L10 6" {...stroke} /></svg>
      <svg width="11" height="15" viewBox="0 0 11 15"><rect x="1" y="3" width="9" height="11" rx="2" {...stroke} /><path d="M3.500 1h4" {...stroke} /><circle cx="5.500" cy="8.500" r="2" {...stroke} /></svg>
      <svg width="16" height="14" viewBox="0 0 16 14"><path d="M4.500 2H15v8H4.500M9.500 10v2.500M6 12.500h7M1 1h3.500v4H1zM2.700 5v7.500" {...stroke} /></svg>
      <svg width="16" height="12" viewBox="0 0 16 12"><path d="M5 3h9v7H2V8M14.500 5v3M1 1v3M4 1v3M.5 4h4v2h-2v3" {...stroke} /><path d="M7 5h5v3H7z" fill="#eee" /></svg>
      <svg width="17" height="14" viewBox="0 0 17 14"><path d="M1 5h2.500L7 1.500v11L3.500 9H1zM9.500 4.500q2 2.500 0 5M11.700 2.800q3.500 4.200 0 8.400M14 1q5 6 0 12" {...stroke} /></svg>
      <span>FRA</span>
      <Clock>10:51<br />2021-11-28</Clock>
      <svg width="15" height="15" viewBox="0 0 15 15"><path d="M.5 1h14v10H9l-2.500 3V11h-6z" fill="#fff" /><path d="M3 4h9M3 6h9M3 8h6" stroke="#33413e" /></svg>
    </Tray>
  </Taskbar>
);

export default function App() {
  return (
    <Window>
      <Global />
      <TitleArea />
      <RibbonArea />
      <Workspace>
        <Dock>
          <DocumentTabs />
          <DockBody>
            <LibraryArea />
            <Dots $vertical $w="14px" />
            <ModelCanvas />
          </DockBody>
        </Dock>
        <Dots $vertical $w="11px" />
        <BrowseArea />
      </Workspace>
      <StatusBar>
        <StatusCell $w={69}><PlayBadge size={15} fill="#3faa7f" kind="play" />Running</StatusCell>
        <Progress>0%</Progress>
        <StatusDivider />
        <span>(0,06 Hours) 29 novembre 2021 00:03:42</span>
      </StatusBar>
      <TaskbarArea />
      <Floating $x={1184} $y={237}><RecorderWidget /></Floating>
      <Floating $x={1272} $y={609}><svg width="8" height="43"><rect width="8" height="43" rx="4" fill="#2c303a" /></svg></Floating>
      <Floating $x={1245} $y={660}><svg width="12" height="19" viewBox="0 0 12 19"><path d="M1 1v14.500l3.500-3.300 2.200 5.300 2.200-1-2.200-5H11z" fill="#fff" stroke="#222" /></svg></Floating>
    </Window>
  );
}
